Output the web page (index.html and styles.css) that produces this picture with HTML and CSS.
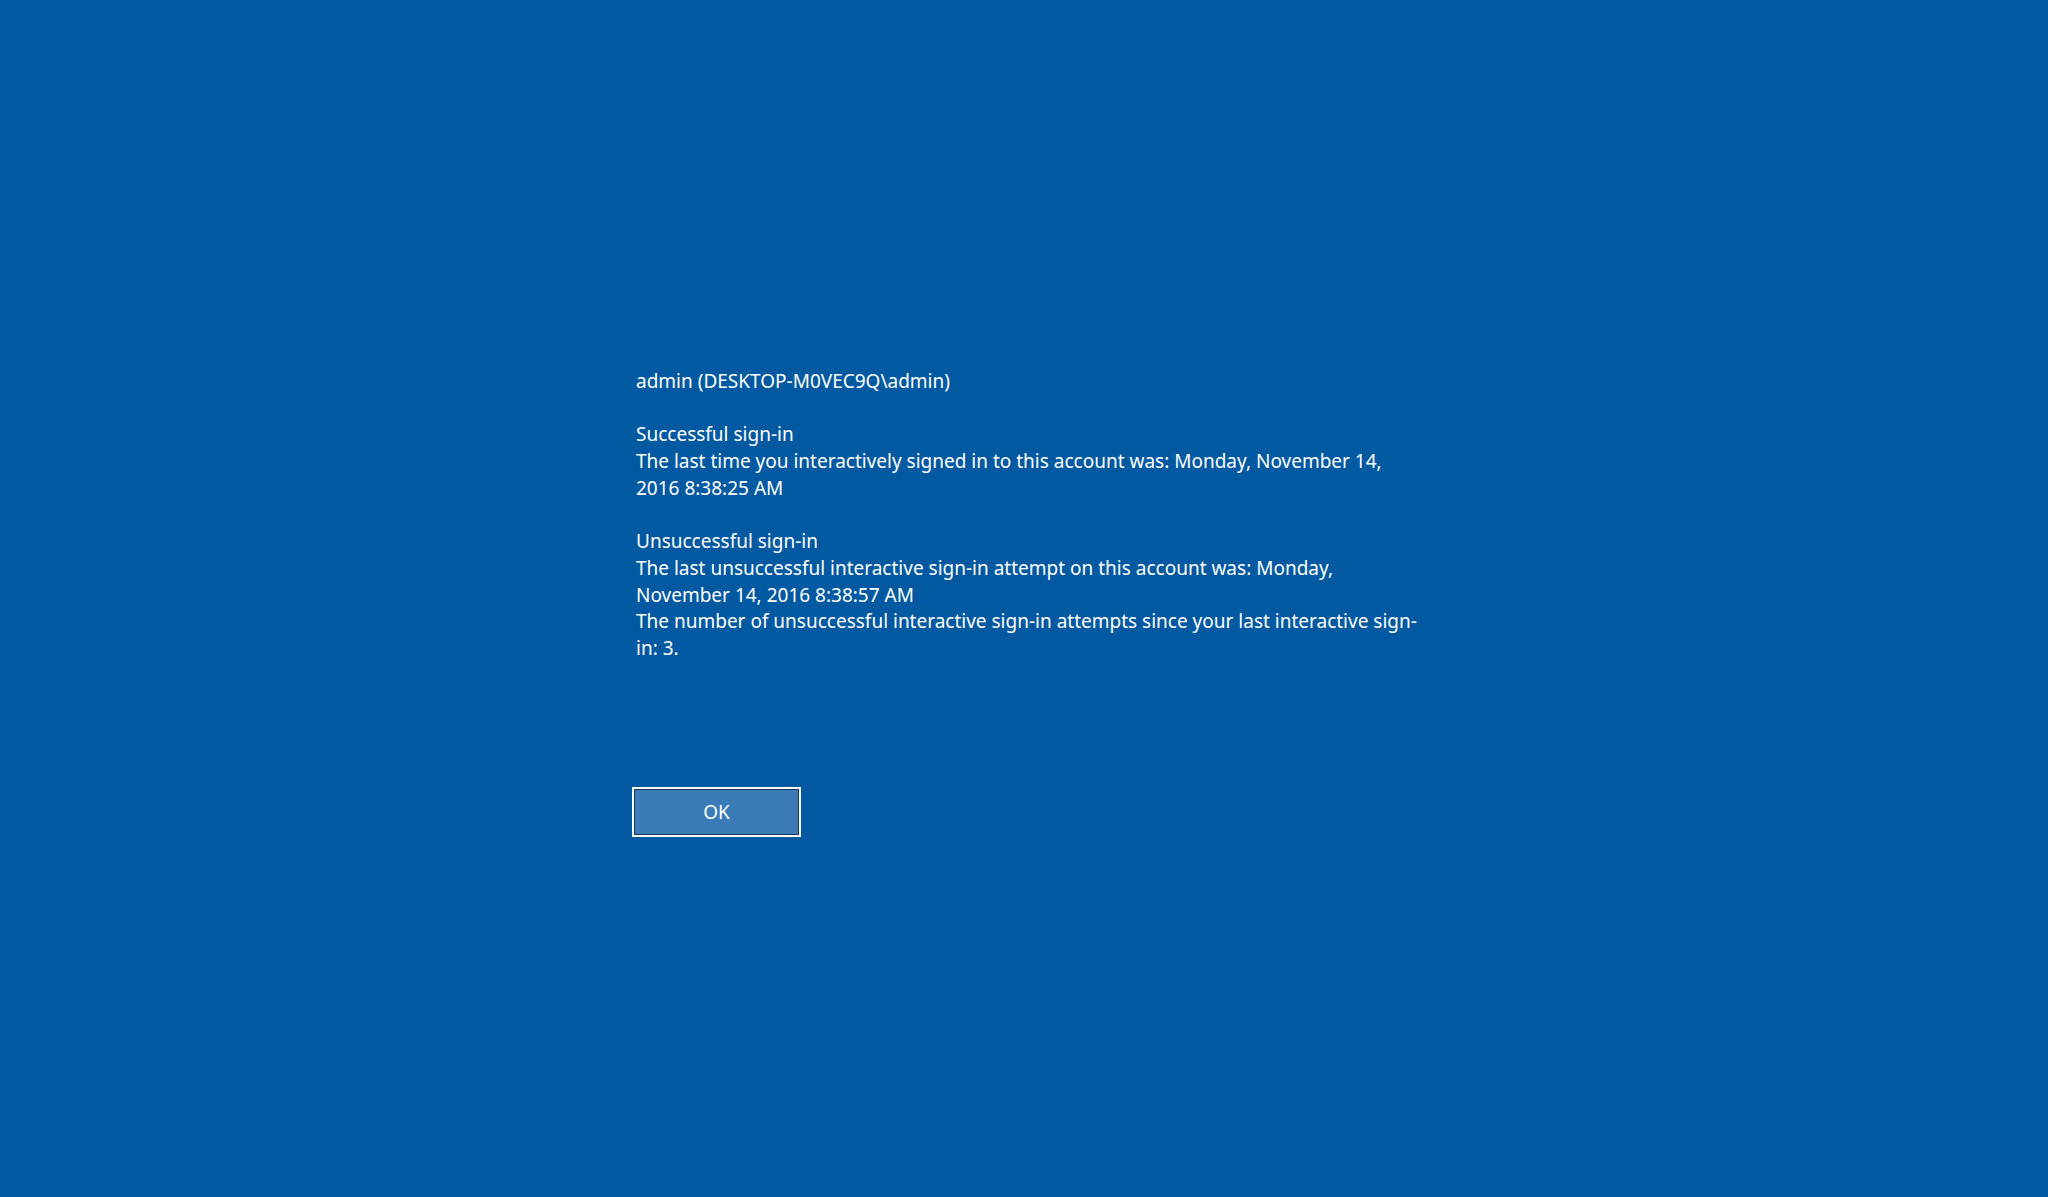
FILE: index.html
```html
<!DOCTYPE html>
<html>
<head>
<meta charset="utf-8">
<link rel="stylesheet" href="styles.css">
</head>
<body>
<main class="panel">
  <div class="message">
    <p class="line">admin (DESKTOP-M0VEC9Q\admin)</p>
    <p class="gap"></p>
    <p class="line">Successful sign-in</p>
    <p class="line">The last time you interactively signed in to this account was: Monday, November 14,</p>
    <p class="line">2016 8:38:25 AM</p>
    <p class="gap"></p>
    <p class="line">Unsuccessful sign-in</p>
    <p class="line">The last unsuccessful interactive sign-in attempt on this account was: Monday,</p>
    <p class="line">November 14, 2016 8:38:57 AM</p>
    <p class="line">The number of unsuccessful interactive sign-in attempts since your last interactive sign-</p>
    <p class="line">in: 3.</p>
  </div>
  <button class="ok">OK</button>
</main>
</body>
</html>
```
FILE: styles.css
```css
html, body {
  margin: 0;
  padding: 0;
  height: 100%;
}
body {
  background: #0059a1;
  color: #ffffff;
  font-family: "Noto Sans", "Open Sans", "Liberation Sans", sans-serif;
}
.panel {
  display: flex;
  flex-direction: column;
  align-items: flex-start;
  padding: 368px 0 0 636px;
}
.message {
  font-size: 19px;
  line-height: 26.7px;
}
.line {
  margin: 0;
  white-space: nowrap;
}
.gap {
  margin: 0;
  height: 26.7px;
}
.ok {
  margin-top: 125px;
  margin-left: -4px;
  width: 169px;
  height: 50px;
  box-sizing: border-box;
  border: 2px solid #ffffff;
  box-shadow: inset 0 0 0 1px #1c3456;
  background: #3b7bb8;
  color: #ffffff;
  font-family: "Noto Sans", "Open Sans", "Liberation Sans", sans-serif;
  font-size: 19px;
  padding: 0;
}
```
